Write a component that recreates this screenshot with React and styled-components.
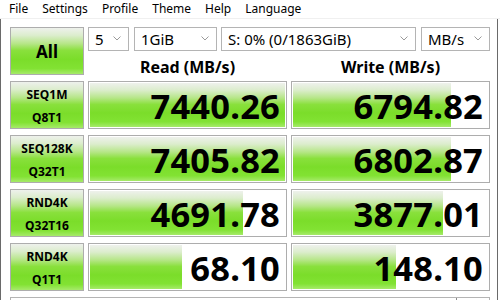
import React from 'react'
import styled, { createGlobalStyle } from 'styled-components'

const GlobalStyle = createGlobalStyle`
    html, body {
        margin: 0;
        padding: 0;
        background: #fff;
        overflow: hidden;
    }

    body {
        font-family: "Noto Sans", "Open Sans", sans-serif;
        color: #000;
    }
`

const green = `linear-gradient(180deg, #eef1ec 0%, #dcedcd 16%, #b6e688 34%, #89e03c 49%, #7bdd2a 68%, #82e233 88%, #a6ea6a 100%)`

const Window = styled.div`
    width: 500px;
    height: 300px;
    display: flex;
    flex-direction: column;
`

const MenuBar = styled.div`
    height: 18px;
    display: flex;
    align-items: center;
    padding-left: 2px;
    border-bottom: 1px solid #f0f0f0;
    font-size: 12px;

    span {
        padding: 0 7px;
        line-height: 18px;
    }
`

const Panel = styled.div`
    flex: 1;
    border-left: 1px solid #6a6a6a;
    border-right: 1px solid #6a6a6a;
    margin-right: 2px;
    padding: 8px 0 0 9px;
    overflow: hidden;
`

const Board = styled.div`
    display: grid;
    grid-template-columns: 74px 199px 199px;
    grid-template-rows: 24px 18px repeat(4, 48px) 30px;
    column-gap: 4px;
    row-gap: 6px;
`

const GreenBox = styled.div`
    box-sizing: border-box;
    border: 1px solid #adadad;
    background: ${green};
    display: flex;
    flex-direction: column;
    align-items: center;
    justify-content: center;
    font-weight: bold;
`

const AllButton = styled(GreenBox)`
    grid-row: 1 / 3;
    font-size: 17px;
`

const TestLabel = styled(GreenBox)`
    font-size: 12px;
    line-height: 23px;
    padding-top: 1px;
`

const Controls = styled.div`
    grid-column: 2 / 4;
    display: flex;
    gap: 4px;
`

const Combo = styled.div`
    box-sizing: border-box;
    width: ${p => p.$w}px;
    margin-left: ${p => p.$ml || 0}px;
    height: 24px;
    border: 1px solid #b4b4b4;
    background: #fff;
    display: flex;
    align-items: center;
    justify-content: space-between;
    padding: 0 7px 1px 6px;
    font-size: 15px;
    white-space: nowrap;
`

const ColHead = styled.div`
    font-size: 16px;
    font-weight: bold;
    text-align: center;
    line-height: 18px;
    padding-top: 1px;
`

const ResultBox = styled.div`
    position: relative;
    box-sizing: border-box;
    border: 1px solid #adadad;
    padding: 1px;
    background: #fff;
`

const Fill = styled.div`
    height: 100%;
    background: ${green};
`

const Value = styled.div`
    position: absolute;
    inset: 0;
    display: flex;
    align-items: center;
    justify-content: flex-end;
    padding-right: 6px;
    font-size: 34.5px;
    font-weight: bold;
    letter-spacing: 0.2px;
`

const Comment = styled.div`
    grid-column: 1 / 4;
    box-sizing: border-box;
    border: 1px solid #b4b4b4;
    display: flex;
    justify-content: flex-end;

    div {
        width: 32px;
        border-left: 1px solid #8a8a8a;
    }
`

const Chevron = () => (
    <svg width="8" height="5" viewBox="0 0 8 5">
        <path d="M0.5 0.5 L4 4 L7.5 0.5" fill="none" stroke="#9a9a9a" strokeWidth="1" />
    </svg>
)

const menus = ['File', 'Settings', 'Profile', 'Theme', 'Help', 'Language']

const results = [
    { name: 'SEQ1M', q: 'Q8T1', read: '7440.26', rp: 100, write: '6794.82', wp: 81 },
    { name: 'SEQ128K', q: 'Q32T1', read: '7405.82', rp: 100, write: '6802.87', wp: 81 },
    { name: 'RND4K', q: 'Q32T16', read: '4691.78', rp: 78.5, write: '3877.01', wp: 77 },
    { name: 'RND4K', q: 'Q1T1', read: '68.10', rp: 47, write: '148.10', wp: 53 },
]

const Result = ({ value, pct }) => (
    <ResultBox>
        <Fill style={{ width: `${pct}%` }} />
        <Value>{value}</Value>
    </ResultBox>
)

const App = () => {
    return (
        <Window>
            <GlobalStyle />
            <MenuBar>
                {menus.map(m => <span key={m}>{m}</span>)}
            </MenuBar>
            <Panel>
                <Board>
                    <AllButton>All</AllButton>
                    <Controls>
                        <Combo $w={41}>5<Chevron /></Combo>
                        <Combo $w={83} $ml={1}>1GiB<Chevron /></Combo>
                        <Combo $w={195}>S: 0% (0/1863GiB)<Chevron /></Combo>
                        <Combo $w={69} $ml={1}>MB/s<Chevron /></Combo>
                    </Controls>
                    <ColHead>Read (MB/s)</ColHead>
                    <ColHead>Write (MB/s)</ColHead>
                    {results.map((r, i) => (
                        <React.Fragment key={i}>
                            <TestLabel>
                                <span>{r.name}</span>
                                <span>{r.q}</span>
                            </TestLabel>
                            <Result value={r.read} pct={r.rp} />
                            <Result value={r.write} pct={r.wp} />
                        </React.Fragment>
                    ))}
                    <Comment><div /></Comment>
                </Board>
            </Panel>
        </Window>
    )
}

export default App
